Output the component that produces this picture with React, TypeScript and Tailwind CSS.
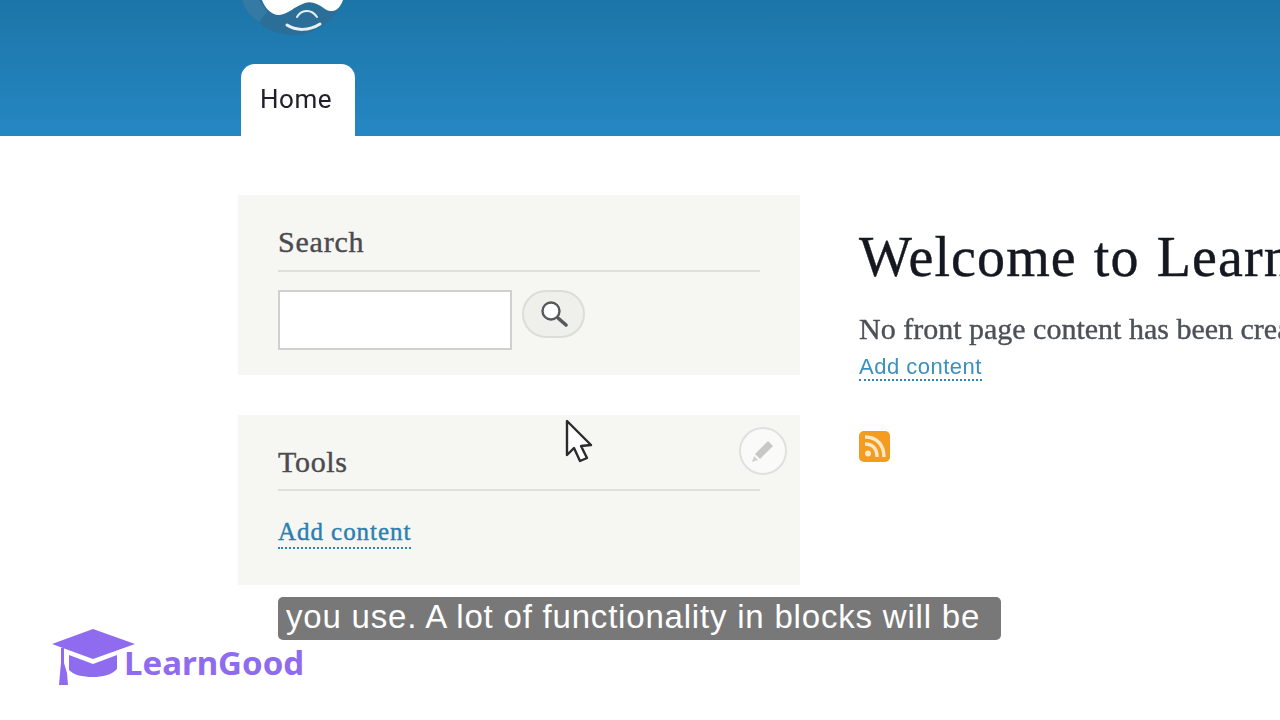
import React from "react";

const serif = "font-['Liberation_Serif',serif] [-webkit-text-stroke:0.4px]";

function DrupalDrop() {
  return (
    <svg width="130" height="40" viewBox="0 0 130 40" className="block">
      <circle cx="52" cy="-18" r="53" fill="#2b6f98" />
      <path d="M1 0 C4 9 10 17 18 22 L26 12 L18 0 Z" fill="#357aa4" />
      <path d="M21 0 C24 8 30 15 38 15 C46 15 54 6 64 3 C70 1 76 3 84 9 C90 13 98 12 102 0 Z" fill="#fff" />
      <path d="M56 17 C60 10 70 8 76 17" fill="none" stroke="#e8f0f5" strokeWidth="2" strokeLinecap="round" />
      <path d="M46 25 C55 31 68 31 79 24" fill="none" stroke="#e8f0f5" strokeWidth="3" strokeLinecap="round" />
    </svg>
  );
}

function Cursor() {
  return (
    <svg width="30" height="44" viewBox="0 0 30 44" className="absolute left-[564px] top-[419px]">
      <path d="M3 2 L3 36 L10 29 L16 42 L23 39 L17 27 L27 26 Z" fill="#fff" stroke="#2b2b2b" strokeWidth="2.4" strokeLinejoin="round" />
    </svg>
  );
}

function RssIcon() {
  return (
    <svg width="31" height="31" viewBox="0 0 31 31" className="block">
      <rect width="31" height="31" rx="5" fill="#f39c1f" />
      <circle cx="9" cy="22.5" r="3" fill="#fde9c8" />
      <path d="M6 13 C14 13 18 18 18 26" fill="none" stroke="#fde9c8" strokeWidth="3.4" />
      <path d="M6 6 C18 6 25 14 25 26" fill="none" stroke="#fde9c8" strokeWidth="3.4" />
    </svg>
  );
}

function Logo() {
  return (
    <div className="absolute left-[52px] top-[629px] flex items-start">
      <svg width="84" height="58" viewBox="0 0 84 58" className="block">
        <path d="M41 0 L83 15 L41 30 L0 15 Z" fill="#8f6bef" />
        <path d="M17 26 L41 35 L65 26 L65 40 C60 46 50 48 41 48 C30 48 22 46 17 41 Z" fill="#8f6bef" />
        <path d="M9 19 L12 19 L12 34 L15 44 L16 56 L7 56 L8 44 L9 34 Z" fill="#8f6bef" />
      </svg>
      <span className="-ml-[12px] mt-[14px] font-['Noto_Sans',sans-serif] text-[33px] leading-[40px] font-bold text-[#8f6bef]">
        LearnGood
      </span>
    </div>
  );
}

export default function App() {
  return (
    <div className="relative h-[720px] w-[1280px] overflow-hidden bg-white">
      <header className="relative h-[136px] bg-gradient-to-b from-[#1c75a8] to-[#2587c2]">
        <div className="absolute left-[241px] top-0">
          <DrupalDrop />
        </div>
        <div className="absolute left-[241px] top-[64px] flex h-[73px] w-[114px] rounded-t-[14px] bg-white pl-[19px] pt-[20px] font-['Roboto',sans-serif] text-[26px] leading-[30px] tracking-[0.5px] text-[#20202c] blur-[0.3px]">
          Home
        </div>
      </header>

      <main className="flex pl-[238px] pt-[59px] blur-[0.4px]">
        <aside className="flex w-[562px] shrink-0 flex-col gap-[40px]">
          <section className="h-[180px] bg-[#f6f6f3] px-[40px] pt-[28px]">
            <h2 className={`${serif} border-b-2 border-[#dfdfdb] pb-[10px] text-[30px] leading-[37px] tracking-[0.8px] text-[#4a4a50]`}>Search</h2>
            <div className="mt-[18px] flex items-start gap-[10px]">
              <div className="h-[60px] w-[234px] border-2 border-[#d0d0d0] bg-white" />
              <button className="flex h-[48px] w-[63px] items-center justify-center rounded-[24px] border-2 border-[#dcdcd8] bg-[#efefeb]">
                <svg width="32" height="32" viewBox="0 0 32 32">
                  <circle cx="13" cy="13" r="8.5" fill="#fff" stroke="#55595c" strokeWidth="2.4" />
                  <path d="M20 20 L28 27" stroke="#55595c" strokeWidth="3.6" strokeLinecap="round" />
                </svg>
              </button>
            </div>
          </section>

          <section className="relative h-[170px] bg-[#f6f6f3] px-[40px] pt-[28px]">
            <h2 className={`${serif} border-b-2 border-[#dfdfdb] pb-[9px] text-[30px] leading-[37px] tracking-[0.7px] text-[#4a4a50]`}>Tools</h2>
            <a className={`${serif} mt-[26px] inline-block border-b-2 border-dotted border-[#2a86b8] text-[25px] leading-[30px] tracking-[0.95px] text-[#2a7fb0]`}>Add content</a>
            <div className="absolute right-[13px] top-[12px] flex h-[48px] w-[48px] items-center justify-center rounded-full border-2 border-[#e0e0dc] bg-[#fafaf8]">
              <svg width="30" height="30" viewBox="0 0 30 30">
                <path d="M20 5 L25 10 L12 23 L7 18 Z" fill="#c8c8c6" />
                <path d="M6 20 L10 24 L4 26 Z" fill="#d0d0ce" />
              </svg>
            </div>
          </section>
        </aside>

        <div className="ml-[59px] min-w-0 flex-1 whitespace-nowrap pt-[32px]">
          <h1 className={`${serif} text-[56px] leading-[60px] tracking-[1.1px] [word-spacing:2px] text-[#151820]`}>Welcome to Learn</h1>
          <p className={`${serif} mt-[25px] w-[421px] overflow-hidden text-[30px] leading-[34px] text-[#4d5058]`}>No front page content has been created yet.</p>
          <a className="mt-[8px] inline-block border-b-2 border-dotted border-[#2a86b8] font-['Liberation_Sans',sans-serif] text-[22px] leading-[25px] tracking-[0.5px] text-[#3a90c0]">Add content</a>
          <div className="mt-[50px]">
            <RssIcon />
          </div>
        </div>
      </main>

      <Cursor />
      <Logo />

      <div className="absolute left-[278px] top-[597px] flex h-[43px] w-[723px] items-center rounded-[5px] bg-[#787878] pb-[4px] pl-[8px] font-['Liberation_Sans',sans-serif] text-[33px] tracking-[0.8px] text-white">
        you use. A lot of functionality in blocks will be
      </div>
    </div>
  );
}
